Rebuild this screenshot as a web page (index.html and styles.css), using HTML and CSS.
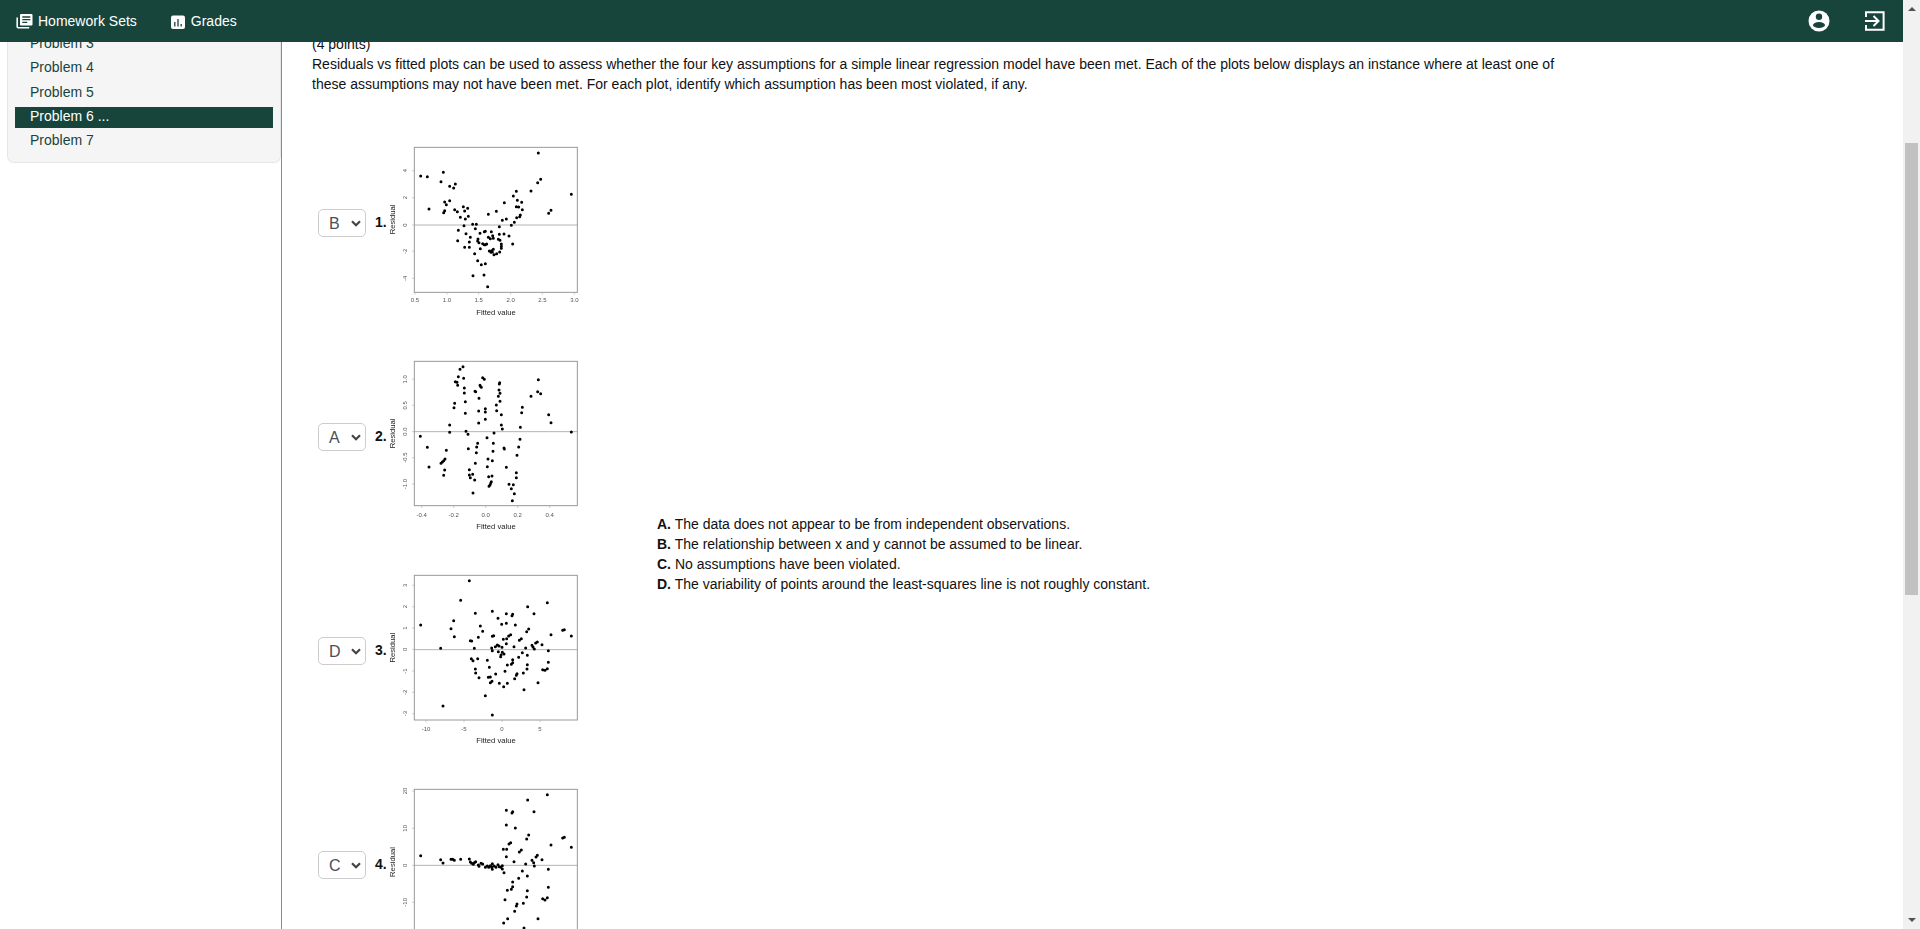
FILE: index.html
```html
<!DOCTYPE html>
<html lang="en">
<head>
<meta charset="utf-8">
<title>Problem 6</title>
<link rel="stylesheet" href="styles.css">
</head>
<body>
<header class="topbar">
  <a class="nav-link" href="#">
    <svg class="nav-icon" viewBox="0 0 17 16" aria-hidden="true"><rect class="ico-fill" x="4" y="1" width="12.5" height="11.5" rx="1"/><path class="ico-dark" d="M6.3 4h8M6.3 6.7h8M6.3 9.4h5"/><path class="ico-line" d="M1.2 4.5v9.3a1 1 0 0 0 1 1h11"/></svg>
    <span>Homework Sets</span>
  </a>
  <a class="nav-link" href="#">
    <svg class="nav-icon grades-icon" viewBox="0 0 14 14" aria-hidden="true"><rect class="ico-fill" x="0" y="0.5" width="14" height="13.5" rx="2"/><path class="ico-dark" d="M3.8 7v4.5M7 4v7.5M10.2 9v2.5"/></svg>
    <span>Grades</span>
  </a>
  <div class="top-actions">
    <svg class="user-icon" viewBox="0 0 22 22" aria-hidden="true"><circle class="ico-fill" cx="11" cy="11" r="10.5"/><circle class="ico-bg" cx="11" cy="6.8" r="3.2"/><ellipse class="ico-bg" cx="11" cy="15" rx="6" ry="3"/></svg>
    <svg class="exit-icon" viewBox="0 0 20 20" aria-hidden="true"><path class="ico-line2" d="M1 6V1.2h17.6v17.6H1V14M0 10h12.5M8.5 5l5 5-5 5"/></svg>
  </div>
</header>

<div class="page">
  <nav class="sidebar">
    <ul class="problem-list">
      <li class="problem">Problem 3</li>
      <li class="problem">Problem 4</li>
      <li class="problem">Problem 5</li>
      <li class="problem is-current">Problem 6 ...</li>
      <li class="problem">Problem 7</li>
    </ul>
  </nav>

  <main class="content">
    <p class="points">(4 points)</p>
    <p class="intro">Residuals vs fitted plots can be used to assess whether the four key assumptions for a simple linear regression model have been met. Each of the plots below displays an instance where at least one of these assumptions may not have been met. For each plot, identify which assumption has been most violated, if any.</p>

    <div class="matching">
      <div class="plots">

        <div class="plot-row">
          <div class="pick">
            <select class="answer"><option>A</option><option selected>B</option><option>C</option><option>D</option></select>
            <svg class="chev" viewBox="0 0 10 7" aria-hidden="true"><path d="M1 1.2l4 4 4-4"/></svg>
          </div>
          <b class="num">1.</b>
          <svg class="plot" viewBox="261 30 594 540" aria-label="Residual plot 1">
            <path class="ticks" d="M336 122h7M336 203h7M336 285h7M336 364h7M336 445h7M345 487v7M441 487v7M536 487v7M632 487v7M727 487v7M823 487v7"/>
            <path class="zero" d="M343 285H832"/>
            <rect class="frame" x="343" y="52" width="489" height="435"/>
            <path class="pts" d="M715 69h0M722 148h0M713 158h0M814 193h0M693 183h0M649 184h0M640 198h0M652 211h0M665 217h0M613 218h0M649 230h0M656 231h0M667 239h0M753 241h0M746 250h0M661 255h0M659 260h0M650 263h0M619 267h0M607 271h0M589 244h0M565 253h0M643 277h0M634 286h0M598 290h0M362 138h0M382 140h0M430 127h0M423 155h0M449 169h0M466 162h0M461 174h0M434 216h0M449 212h0M439 224h0M387 237h0M434 242h0M431 248h0M464 239h0M472 245h0M490 230h0M503 235h0M494 243h0M505 259h0M481 262h0M496 267h0M518 283h0M529 283h0M492 287h0M526 296h0M475 301h0M498 311h0M473 332h0M511 322h0M508 336h0M494 352h0M508 352h0M534 327h0M533 333h0M540 310h0M553 305h0M556 304h0M574 305h0M578 317h0M565 322h0M571 326h0M580 325h0M598 313h0M612 312h0M627 318h0M595 328h0M600 331h0M604 342h0M638 342h0M604 349h0M604 355h0M599 366h0M590 371h0M582 374h0M580 358h0M575 362h0M573 367h0M568 363h0M577 366h0M541 356h0M548 341h0M553 344h0M556 344h0M560 342h0M537 338h0M524 371h0M533 392h0M544 404h0M556 401h0M519 437h0M552 435h0M563 470h0"/>
            <g class="ylab"><text transform="rotate(-90 320 122)" x="320" y="122">4</text><text transform="rotate(-90 320 203)" x="320" y="203">2</text><text transform="rotate(-90 320 285)" x="320" y="285">0</text><text transform="rotate(-90 320 364)" x="320" y="364">-2</text><text transform="rotate(-90 320 445)" x="320" y="445">-4</text></g>
            <g class="xlab"><text x="345" y="517">0.5</text><text x="441" y="517">1.0</text><text x="536" y="517">1.5</text><text x="632" y="517">2.0</text><text x="727" y="517">2.5</text><text x="823" y="517">3.0</text></g>
            <text class="axis" x="588" y="555">Fitted value</text>
            <text class="axis" transform="rotate(-90 286 268)" x="286" y="268">Residual</text>
          </svg>
        </div>

        <div class="plot-row">
          <div class="pick">
            <select class="answer"><option selected>A</option><option>B</option><option>C</option><option>D</option></select>
            <svg class="chev" viewBox="0 0 10 7" aria-hidden="true"><path d="M1 1.2l4 4 4-4"/></svg>
          </div>
          <b class="num">2.</b>
          <svg class="plot" viewBox="261 12 594 540" aria-label="Residual plot 2">
            <path class="ticks" d="M336 88h7M336 166h7M336 245h7M336 323h7M336 402h7M365 467v7M461 467v7M557 467v7M653 467v7M749 467v7"/>
            <path class="zero" d="M343 245H832"/>
            <rect class="frame" x="343" y="34" width="489" height="433"/>
            <path class="pts" d="M489 50h0M480 58h0M475 80h0M491 85h0M466 95h0M471 97h0M473 106h0M548 83h0M553 88h0M540 106h0M541 109h0M544 112h0M493 114h0M493 129h0M525 124h0M527 125h0M599 98h0M598 102h0M597 120h0M600 130h0M595 139h0M715 89h0M713 125h0M722 131h0M693 139h0M537 145h0M496 155h0M600 154h0M464 160h0M462 173h0M589 165h0M667 172h0M556 176h0M536 183h0M556 186h0M590 182h0M665 188h0M604 194h0M496 190h0M746 194h0M556 208h0M536 219h0M753 218h0M449 225h0M604 225h0M607 237h0M661 232h0M449 247h0M498 244h0M504 253h0M582 249h0M814 246h0M361 259h0M561 263h0M660 268h0M533 280h0M580 280h0M530 291h0M382 292h0M505 296h0M656 291h0M612 294h0M613 297h0M439 301h0M529 308h0M579 304h0M651 316h0M435 327h0M431 332h0M427 336h0M423 340h0M564 327h0M577 332h0M526 340h0M387 351h0M562 350h0M619 352h0M434 360h0M508 359h0M431 376h0M508 375h0M518 373h0M649 368h0M649 383h0M511 383h0M524 390h0M566 380h0M576 378h0M574 395h0M572 400h0M570 405h0M567 409h0M627 403h0M640 404h0M634 416h0M643 431h0M519 429h0M637 452h0"/>
            <g class="ylab"><text transform="rotate(-90 320 88)" x="320" y="88">1.0</text><text transform="rotate(-90 320 166)" x="320" y="166">0.5</text><text transform="rotate(-90 320 245)" x="320" y="245">0.0</text><text transform="rotate(-90 320 323)" x="320" y="323">-0.5</text><text transform="rotate(-90 320 402)" x="320" y="402">-1.0</text></g>
            <g class="xlab"><text x="365" y="502">-0.4</text><text x="461" y="502">-0.2</text><text x="557" y="502">0.0</text><text x="653" y="502">0.2</text><text x="749" y="502">0.4</text></g>
            <text class="axis" x="588" y="537">Fitted value</text>
            <text class="axis" transform="rotate(-90 286 250)" x="286" y="250">Residual</text>
          </svg>
        </div>

        <div class="plot-row">
          <div class="pick">
            <select class="answer"><option>A</option><option>B</option><option>C</option><option selected>D</option></select>
            <svg class="chev" viewBox="0 0 10 7" aria-hidden="true"><path d="M1 1.2l4 4 4-4"/></svg>
          </div>
          <b class="num">3.</b>
          <svg class="plot" viewBox="261 9 594 540" aria-label="Residual plot 3">
            <path class="ticks" d="M336 61h7M336 125h7M336 189h7M336 253h7M336 318h7M336 382h7M336 446h7M378 465v7M492 465v7M606 465v7M720 465v7"/>
            <path class="zero" d="M343 254H832"/>
            <rect class="frame" x="343" y="31" width="489" height="434"/>
            <path class="pts" d="M508 47h0M482 106h0M577 139h0M742 113h0M683 125h0M526 145h0M619 146h0M636 152h0M638 148h0M702 146h0M594 160h0M461 167h0M362 180h0M605 178h0M619 175h0M646 180h0M541 183h0M453 191h0M548 199h0M686 192h0M680 200h0M463 215h0M535 217h0M577 214h0M581 212h0M632 209h0M626 213h0M620 221h0M610 223h0M664 221h0M658 226h0M511 227h0M515 228h0M753 209h0M788 196h0M793 194h0M814 213h0M712 231h0M707 234h0M726 239h0M619 236h0M592 240h0M575 249h0M586 245h0M597 243h0M606 247h0M642 245h0M677 249h0M696 241h0M699 246h0M703 252h0M422 250h0M523 250h0M577 257h0M595 260h0M607 262h0M612 267h0M603 270h0M602 275h0M667 263h0M745 257h0M682 271h0M656 277h0M514 281h0M519 287h0M533 281h0M562 286h0M638 284h0M638 293h0M634 298h0M622 300h0M682 299h0M745 292h0M568 307h0M526 312h0M527 324h0M615 319h0M681 312h0M728 314h0M735 316h0M742 311h0M670 324h0M651 326h0M649 331h0M644 341h0M565 337h0M571 336h0M587 327h0M537 338h0M576 349h0M571 353h0M598 355h0M622 355h0M611 365h0M714 353h0M672 374h0M556 392h0M429 423h0M577 450h0"/>
            <g class="ylab"><text transform="rotate(-90 320 61)" x="320" y="61">3</text><text transform="rotate(-90 320 125)" x="320" y="125">2</text><text transform="rotate(-90 320 189)" x="320" y="189">1</text><text transform="rotate(-90 320 253)" x="320" y="253">0</text><text transform="rotate(-90 320 318)" x="320" y="318">-1</text><text transform="rotate(-90 320 382)" x="320" y="382">-2</text><text transform="rotate(-90 320 446)" x="320" y="446">-3</text></g>
            <g class="xlab"><text x="378" y="499">-10</text><text x="492" y="499">-5</text><text x="606" y="499">0</text><text x="720" y="499">5</text></g>
            <text class="axis" x="588" y="534">Fitted value</text>
            <text class="axis" transform="rotate(-90 286 248)" x="286" y="248">Residual</text>
          </svg>
        </div>

        <div class="plot-row">
          <div class="pick">
            <select class="answer"><option>A</option><option>B</option><option selected>C</option><option>D</option></select>
            <svg class="chev" viewBox="0 0 10 7" aria-hidden="true"><path d="M1 1.2l4 4 4-4"/></svg>
          </div>
          <b class="num">4.</b>
          <svg class="plot" viewBox="261 6 594 540" aria-label="Residual plot 4">
            <path class="ticks" d="M336 33h7M336 145h7M336 256h7M336 367h7"/>
            <path class="zero" d="M343 256H832"/>
            <rect class="frame" x="343" y="28" width="489" height="435"/>
            <path class="pts" d="M742 44h0M683 60h0M619 91h0M638 95h0M636 99h0M702 95h0M619 135h0M646 144h0M686 165h0M680 177h0M632 188h0M627 192h0M753 195h0M788 174h0M793 172h0M814 202h0M610 208h0M620 208h0M664 210h0M658 216h0M619 230h0M712 226h0M708 231h0M362 227h0M422 239h0M429 249h0M453 238h0M458 238h0M463 241h0M482 238h0M508 237h0M511 246h0M515 250h0M523 248h0M527 245h0M520 253h0M535 255h0M537 259h0M543 250h0M548 252h0M556 262h0M562 258h0M566 262h0M571 257h0M577 251h0M577 268h0M582 258h0M588 262h0M594 254h0M598 260h0M603 262h0M607 257h0M607 267h0M575 262h0M612 278h0M642 245h0M696 241h0M701 248h0M726 239h0M677 252h0M703 258h0M745 268h0M667 273h0M682 288h0M656 295h0M638 306h0M638 320h0M634 328h0M622 331h0M682 332h0M745 322h0M615 359h0M680 351h0M728 356h0M735 360h0M742 353h0M670 370h0M651 372h0M649 378h0M644 394h0M623 416h0M714 416h0M611 429h0M672 444h0"/>
            <g class="ylab"><text transform="rotate(-90 320 33)" x="320" y="33">20</text><text transform="rotate(-90 320 145)" x="320" y="145">10</text><text transform="rotate(-90 320 256)" x="320" y="256">0</text><text transform="rotate(-90 320 367)" x="320" y="367">-10</text></g>
            <text class="axis" transform="rotate(-90 286 246)" x="286" y="246">Residual</text>
          </svg>
        </div>

      </div>

      <ul class="choices">
        <li><b>A.</b> The data does not appear to be from independent observations.</li>
        <li><b>B.</b> The relationship between x and y cannot be assumed to be linear.</li>
        <li><b>C.</b> No assumptions have been violated.</li>
        <li><b>D.</b> The variability of points around the least-squares line is not roughly constant.</li>
      </ul>
    </div>
  </main>

  <div class="scrollbar" aria-hidden="true">
    <div class="arrow-up"></div>
    <div class="thumb"></div>
    <div class="arrow-down"></div>
  </div>
</div>
</body>
</html>
```

FILE: styles.css
```css
* { box-sizing: border-box; }
html, body { margin: 0; height: 100%; overflow: hidden; }
body { font-family: "Liberation Sans", Arial, sans-serif; font-size: 14px; line-height: 20px; color: #111; background: #fff; }

.topbar { position: fixed; top: 0; left: 0; right: 17px; height: 42px; background: #18453b; display: flex; align-items: center; padding-left: 16px; z-index: 5; }
.nav-link { display: flex; align-items: center; color: #fff; text-decoration: none; margin-right: 34px; gap: 5px; }
.nav-icon { width: 17px; height: 16px; }
.grades-icon { width: 14px; height: 14px; margin-top: 1px; margin-right: 1px; }
.ico-fill { fill: #fff; }
.ico-bg { fill: #18453b; }
.ico-dark { fill: none; stroke: #18453b; stroke-width: 1.3; }
.ico-line { fill: none; stroke: #fff; stroke-width: 1.6; }
.ico-line2 { fill: none; stroke: #fff; stroke-width: 2; }
.top-actions { margin-left: auto; display: flex; align-items: center; gap: 35px; padding-right: 18px; }
.user-icon { width: 22px; height: 22px; }
.exit-icon { width: 20px; height: 20px; }

.page { display: flex; height: 929px; overflow: hidden; }

.sidebar { flex: 0 0 282px; border-right: 1px solid #8a8a8a; padding-left: 7px; }
.problem-list { list-style: none; margin: 0; padding: 34px 7px 10px; background: #f5f5f5; border: 1px solid #e6e6e6; border-top: 0; border-radius: 0 0 7px 7px; width: 274px; display: flex; flex-direction: column; gap: 3.3px; }
.problem { height: 21px; line-height: 19px; padding-left: 15px; color: #18453b; }
.is-current { background: #18453b; color: #fff; }

.content { flex: 1; min-width: 0; padding: 34px 0 0 30px; }
.points, .intro { margin: 0; }
.intro { width: 1250px; }

.matching { display: flex; margin-top: 46px; }
.plots { display: flex; flex-direction: column; gap: 34px; padding-left: 6px; }
.plot-row { display: flex; align-items: flex-start; height: 180px; }
.pick { position: relative; width: 48px; height: 28px; margin: 69px 9px 0 0; }
.answer { appearance: none; -webkit-appearance: none; width: 100%; height: 100%; background: #fff; border: 1px solid #ccc; border-radius: 5px; padding: 0 0 0 10px; font: 16px "Liberation Sans", Arial, sans-serif; color: #495057; }
.chev { position: absolute; top: 11px; right: 5px; width: 10px; height: 7px; pointer-events: none; }
.chev path { fill: none; stroke: #444; stroke-width: 2.2; }
.num { width: 12px; margin-top: 72px; font-size: 14px; }
.plot { width: 198px; height: 180px; display: block; filter: blur(0.25px); }

.frame { fill: none; stroke: #999; stroke-width: 3; }
.zero { fill: none; stroke: #b4b4b4; stroke-width: 3; }
.ticks { fill: none; stroke: #bbb; stroke-width: 2; }
.pts { fill: none; stroke: #000; stroke-width: 9; stroke-linecap: round; }
.ylab text, .xlab text { font: 18px "Liberation Sans", Arial, sans-serif; fill: #555; text-anchor: middle; }
.axis { font: 23px "Liberation Sans", Arial, sans-serif; fill: #222; text-anchor: middle; }

.choices { list-style: none; margin: 374px 0 0 72px; padding: 0; }

.scrollbar { flex: 0 0 17px; background: #f1f1f1; display: flex; flex-direction: column; align-items: center; }
.arrow-up { width: 0; height: 0; margin-top: 7px; border: 4px solid transparent; border-top: 0; border-bottom: 4px solid #505050; }
.thumb { width: 13px; height: 452px; margin-top: 132px; background: #c1c1c1; }
.arrow-down { width: 0; height: 0; margin-top: auto; margin-bottom: 7px; border: 4px solid transparent; border-bottom: 0; border-top: 4px solid #505050; }
```
